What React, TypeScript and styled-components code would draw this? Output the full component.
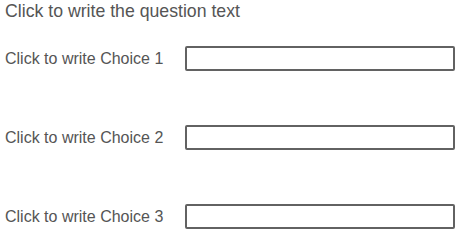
import React from "react";
import styled, { createGlobalStyle } from "styled-components";

const Global = createGlobalStyle`
  html, body { margin: 0; padding: 0; background: #ffffff; }
  body { font-family: "Liberation Sans", Arial, sans-serif; }
`;

const Page = styled.div`
  padding: 0 0 0 5px;
  color: #555555;
`;

const Question = styled.div`
  font-size: 17.7px;
  line-height: 22px;
  margin-bottom: 24px;
`;

const Choices = styled.div`
  display: flex;
  flex-direction: column;
  gap: 54px;
`;

const Row = styled.label`
  display: grid;
  grid-template-columns: 180px 270px;
  align-items: center;
`;

const Label = styled.span`
  font-size: 16px;
  line-height: 20px;
`;

const Input = styled.input`
  box-sizing: border-box;
  width: 270px;
  height: 25px;
  margin: 0;
  border: 2px solid #626262;
  border-radius: 2px;
  background: #ffffff;
  outline: none;
`;

const choices = ["Click to write Choice 1", "Click to write Choice 2", "Click to write Choice 3"];

export default function App() {
  return (
    <>
      <Global />
      <Page>
        <Question>Click to write the question text</Question>
        <Choices>
          {choices.map((c) => (
            <Row key={c}>
              <Label>{c}</Label>
              <Input type="text" />
            </Row>
          ))}
        </Choices>
      </Page>
    </>
  );
}
